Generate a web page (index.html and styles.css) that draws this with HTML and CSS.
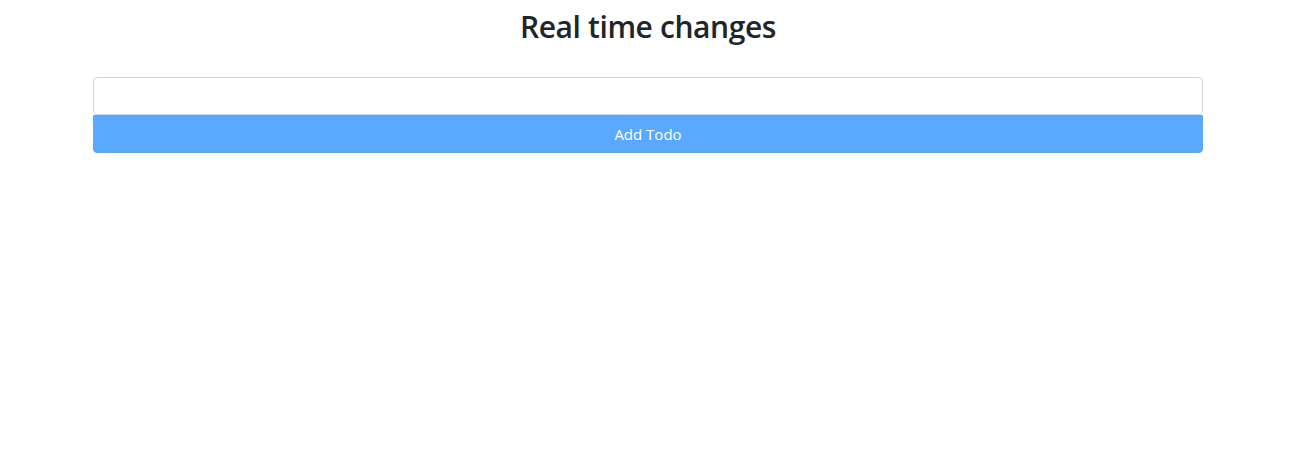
FILE: index.html
```html
<!DOCTYPE html>
<html lang="en">
<head>
<meta charset="utf-8">
<title>Real time changes</title>
<link rel="stylesheet" href="styles.css">
</head>
<body>
<div class="container">
  <h2 class="title">Real time changes</h2>
  <form class="todo-form">
    <input class="todo-input" type="text">
    <button class="todo-btn" type="button" disabled>Add Todo</button>
  </form>
</div>
</body>
</html>
```

FILE: styles.css
```css
html, body {
  margin: 0;
  padding: 0;
  background: #fff;
}
body {
  font-family: "Open Sans", "Noto Sans", sans-serif;
  color: #212529;
}
.container {
  width: 1110px;
  margin-left: 93px;
}
.title {
  margin: 0 0 27px 0;
  padding-top: 4px;
  font-size: 30px;
  line-height: 46px;
  font-weight: 600;
  text-align: center;
  color: #212529;
  letter-spacing: -0.4px;
}
.todo-form {
  display: flex;
  flex-direction: column;
  margin: 0;
}
.todo-input {
  box-sizing: border-box;
  height: 38px;
  width: 100%;
  margin: 0;
  padding: 6px 12px;
  border: 1px solid #ced4da;
  border-radius: 4px;
  font-size: 16px;
  background: #fff;
  outline: none;
}
.todo-btn {
  box-sizing: border-box;
  height: 38px;
  width: 100%;
  margin: 0;
  border: 1px solid #59a9ff;
  border-radius: 0 0 4px 4px;
  background: #59a9ff;
  color: #fff;
  font-family: "Open Sans", "Noto Sans", sans-serif;
  font-size: 15px;
  padding: 0;
}
```
